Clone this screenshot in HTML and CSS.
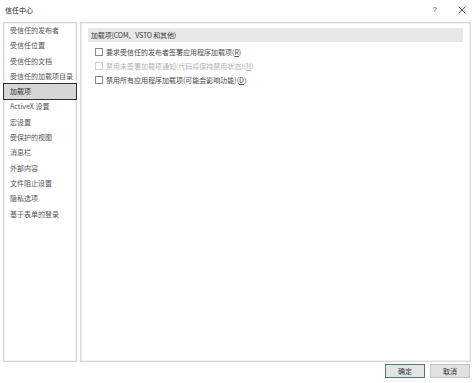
FILE: index.html
```html
<!DOCTYPE html>
<html lang="zh-CN">
<head>
<meta charset="utf-8">
<title>信任中心</title>
<link rel="stylesheet" href="styles.css">
</head>
<body>
<div class="dialog">
  <div class="titlebar">
    <span class="title">信任中心</span>
    <span class="tb-btns">
      <span class="help">?</span>
      <span class="close">
        <svg width="8" height="8" viewBox="0 0 8 8"><path d="M0.5 0.5L7.5 7.5M7.5 0.5L0.5 7.5" stroke="#444" stroke-width="0.9" fill="none"/></svg>
      </span>
    </span>
  </div>
  <div class="main">
    <ul class="nav">
      <li>受信任的发布者</li>
      <li>受信任位置</li>
      <li>受信任的文档</li>
      <li>受信任的加载项目录</li>
      <li class="selected">加载项</li>
      <li>ActiveX 设置</li>
      <li>宏设置</li>
      <li>受保护的视图</li>
      <li>消息栏</li>
      <li>外部内容</li>
      <li>文件阻止设置</li>
      <li>隐私选项</li>
      <li>基于表单的登录</li>
    </ul>
    <div class="content">
      <div class="band">加载项(COM、VSTO 和其他)</div>
      <div class="options">
        <label class="opt"><span class="box"></span><span>要求受信任的发布者签署应用程序加载项(<u>R</u>)</span></label>
        <label class="opt disabled"><span class="box"></span><span>禁用未签署加载项通知(代码将保持禁用状态)(<u>N</u>)</span></label>
        <label class="opt"><span class="box"></span><span>禁用所有应用程序加载项(可能会影响功能)(<u>D</u>)</span></label>
      </div>
    </div>
  </div>
  <div class="footer">
    <button class="btn primary">确定</button>
    <button class="btn">取消</button>
  </div>
</div>
</body>
</html>
```

FILE: styles.css
```css
* { box-sizing: border-box; }
html, body { margin: 0; padding: 0; background: #fff; }
body {
  font-family: "Noto Sans CJK SC", "Noto Sans", sans-serif;
  font-size: 7px;
  color: #505050;
}
.dialog {
  width: 474px;
  height: 383px;
  display: flex;
  flex-direction: column;
  background: #fff;
}
.titlebar {
  height: 22px;
  display: flex;
  align-items: center;
  justify-content: space-between;
  padding: 0 8px 3px 5px;
}
.title { color: #262626; font-size: 7px; }
.tb-btns { display: flex; align-items: center; gap: 21px; }
.help { font-family: "Liberation Sans", sans-serif; font-size: 8px; color: #555; }
.close { display: flex; }
.main {
  height: 340px;
  display: flex;
  gap: 3px;
  padding: 0 3px;
}
.nav {
  list-style: none;
  margin: 0;
  padding: 0;
  width: 74px;
  border: 1px solid #d8d8d8;
  box-shadow: inset 0 0 0 1px #f0f0f0;
}
.nav li {
  height: 15.3px;
  line-height: 15.3px;
  padding-left: 6px;
  white-space: nowrap;
  color: #555;
}
.nav li.selected {
  background: #d6d6d6;
  color: #333;
  outline: 1.5px solid #2e2e2e;
  outline-offset: 0;
}
.content {
  flex: 1;
  border: 1px solid #d8d8d8;
  box-shadow: inset 0 0 0 1px #f0f0f0;
  padding: 5px 7px 0 7px;
}
.band {
  height: 14px;
  line-height: 14px;
  background: #e8e8e8;
  padding-left: 3px;
  color: #3a3a3a;
  letter-spacing: -0.15px;
}
.options {
  padding: 3px 0 0 7px;
  display: flex;
  flex-direction: column;
}
.opt {
  height: 14px;
  display: flex;
  align-items: center;
  gap: 3px;
  color: #4a4a4a;
}
.opt .box {
  width: 8px;
  height: 8px;
  border: 1px solid #8a8a8a;
  background: #fff;
  flex: none;
}
.opt.disabled { color: #b3b3b3; }
.opt.disabled .box { border-color: #cfcfcf; }
.opt u { text-decoration-thickness: 0.6px; text-underline-offset: 1px; }
.footer {
  flex: 1;
  display: flex;
  justify-content: flex-end;
  align-items: flex-start;
  gap: 5px;
  padding: 2px 4px 0 0;
}
.btn {
  width: 40px;
  height: 14px;
  padding: 0;
  margin: 0;
  font-family: "Noto Sans CJK SC", "Noto Sans", sans-serif;
  font-size: 7px;
  color: #333;
  background: #e1e1e1;
  border: 1px solid #c4c4c4;
  border-radius: 0;
}
.btn.primary {
  border: 1.5px solid #4f7f68;
  background: #e4e4e4;
}
```
